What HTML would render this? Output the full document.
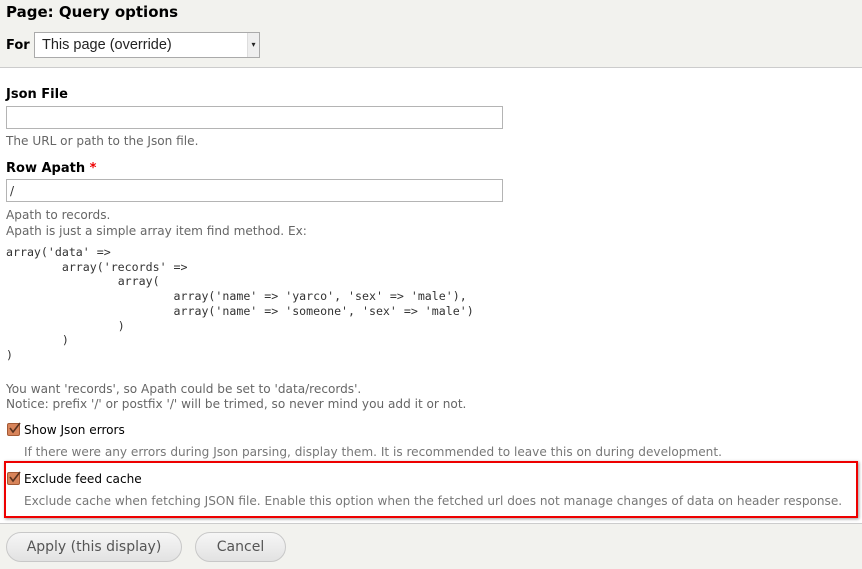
<!DOCTYPE html>
<html><head><meta charset="utf-8"><style>
body{margin:0;width:862px;height:568px;overflow:hidden;background:#fff;font-family:"DejaVu Sans","Liberation Sans",sans-serif;font-size:12.1px;color:#000;position:relative}
.a{position:absolute;white-space:pre;line-height:1}
.hdr{position:absolute;left:0;top:0;width:862px;height:67px;background:#f2f2ee;border-bottom:1px solid #ccc}
.ftr{position:absolute;left:0;top:523px;width:862px;height:45px;background:#f2f2ee;border-top:1px solid #ccc}
.inp{position:absolute;left:6px;width:495px;height:21px;border:1px solid #b4b4b4;background:#fff}
.d{color:#666}
.cb{position:absolute;width:11px;height:11px;background:#d8845a;border:1px solid #a45a35;border-radius:2px;overflow:visible}
.btn{position:absolute;top:532px;height:28px;border:1px solid #c8c8c8;border-radius:15px;background:linear-gradient(#f6f6f6,#e2e2e2);color:#555;font-size:14px;text-align:center;line-height:28px}
pre{position:absolute;left:6px;top:245px;margin:0;font-family:"DejaVu Sans Mono",monospace;font-size:11.6px;line-height:14.7px;color:#333;tab-size:8}
</style></head><body>
<div class="hdr"></div>
<div class="a" style="left:6px;top:5px;font-size:15px;font-weight:bold">Page: Query options</div>
<div class="a" style="left:6px;top:39px;font-weight:bold;font-size:13px">For</div>
<div style="position:absolute;left:34px;top:32px;width:224px;height:24px;border:1px solid #aaa;background:#fff;font-family:'Liberation Sans',sans-serif;font-size:14.5px;line-height:24px;color:#222"><span style="margin-left:7px">This page (override)</span><span style="position:absolute;right:0;top:0;width:11px;height:24px;background:#eee;border-left:1px solid #ddd;font-size:8px;text-align:center">▾</span></div>
<div class="a" style="left:6px;top:88px;font-weight:bold;font-size:13px">Json File</div>
<div class="inp" style="top:106px"></div>
<div class="a d" style="left:6px;top:135px">The URL or path to the Json file.</div>
<div class="a" style="left:6px;top:162px;font-weight:bold;font-size:13px">Row Apath <span style="color:#e00">*</span></div>
<div class="inp" style="top:179px"><span style="position:absolute;left:3px;top:4px;color:#333">/</span></div>
<div class="a d" style="left:6px;top:209px">Apath to records.</div>
<div class="a d" style="left:6px;top:225px">Apath is just a simple array item find method. Ex:</div>
<pre>array('data' =>
	array('records' =>
		array(
			array('name' => 'yarco', 'sex' => 'male'),
			array('name' => 'someone', 'sex' => 'male')
		)
	)
)</pre>
<div class="a d" style="left:6px;top:383px">You want 'records', so Apath could be set to 'data/records'.</div>
<div class="a d" style="left:6px;top:398px">Notice: prefix '/' or postfix '/' will be trimed, so never mind you add it or not.</div>
<div class="cb" style="left:7px;top:423px"><svg width="14" height="14" style="position:absolute;left:0;top:-3px"><path d="M2 7l3 4l7-9" stroke="#5a3320" stroke-width="1.6" fill="none"/></svg></div>
<div class="a" style="left:24px;top:424px">Show Json errors</div>
<div class="a" style="left:24px;top:446px;color:#777">If there were any errors during Json parsing, display them. It is recommended to leave this on during development.</div>
<div style="position:absolute;left:4px;top:461px;width:850px;height:53px;border:2px solid #e00;box-shadow:1px 1px 3px rgba(0,0,0,.4)"></div>
<div class="cb" style="left:7px;top:472px"><svg width="14" height="14" style="position:absolute;left:0;top:-3px"><path d="M2 7l3 4l7-9" stroke="#5a3320" stroke-width="1.6" fill="none"/></svg></div>
<div class="a" style="left:24px;top:473px">Exclude feed cache</div>
<div class="a" style="left:24px;top:495px;color:#777">Exclude cache when fetching JSON file. Enable this option when the fetched url does not manage changes of data on header response.</div>
<div class="ftr"></div>
<div class="btn" style="left:6px;width:174px">Apply (this display)</div>
<div class="btn" style="left:195px;width:89px">Cancel</div>
</body></html>
